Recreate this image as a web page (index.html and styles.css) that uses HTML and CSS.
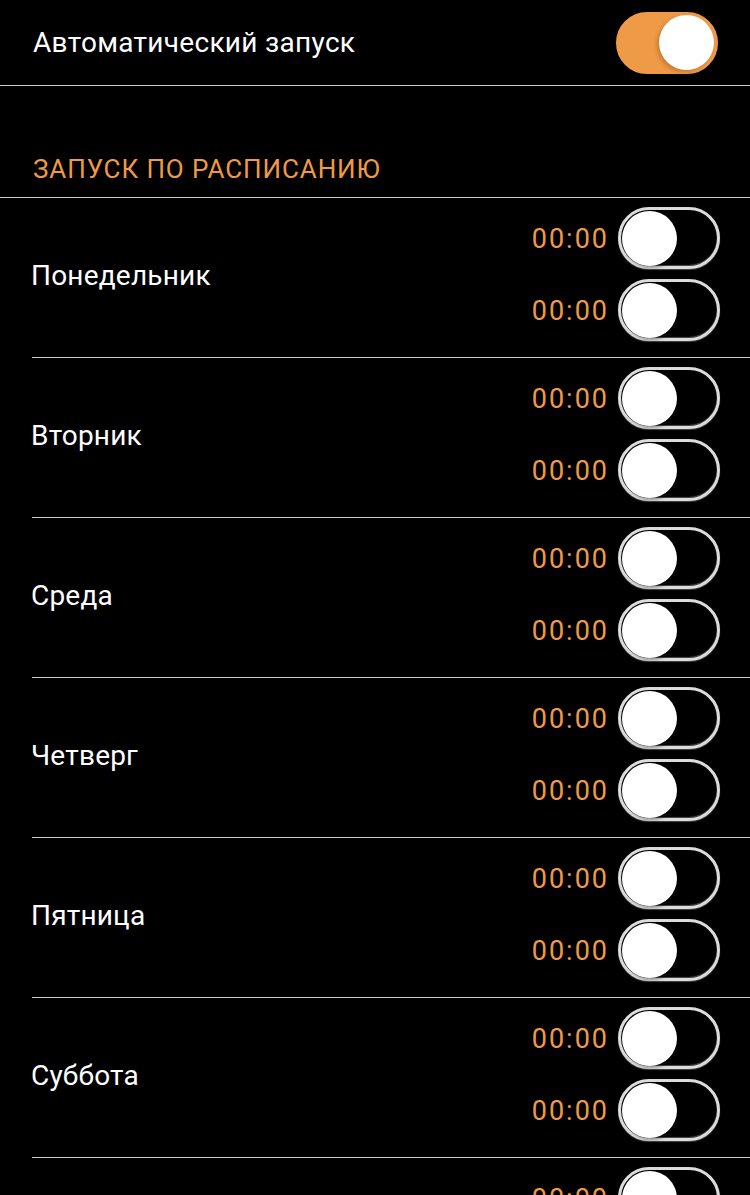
FILE: index.html
```html
<!DOCTYPE html>
<html lang="ru">
<head>
<meta charset="utf-8">
<link rel="stylesheet" href="styles.css">
</head>
<body>
<div class="screen">
  <div class="top-row">
    <span class="top-label">Автоматический запуск</span>
    <span class="toggle on"><span class="knob"></span></span>
  </div>
  <div class="section-gap"></div>
  <div class="section-header">ЗАПУСК ПО РАСПИСАНИЮ</div>
  <div class="list">
    <div class="day-row">
      <span class="day">Понедельник</span>
      <div class="slots">
        <div class="slot"><span class="time">00:00</span><span class="toggle"><span class="knob"></span></span></div>
        <div class="slot"><span class="time">00:00</span><span class="toggle"><span class="knob"></span></span></div>
      </div>
    </div>
    <div class="day-row">
      <span class="day">Вторник</span>
      <div class="slots">
        <div class="slot"><span class="time">00:00</span><span class="toggle"><span class="knob"></span></span></div>
        <div class="slot"><span class="time">00:00</span><span class="toggle"><span class="knob"></span></span></div>
      </div>
    </div>
    <div class="day-row">
      <span class="day">Среда</span>
      <div class="slots">
        <div class="slot"><span class="time">00:00</span><span class="toggle"><span class="knob"></span></span></div>
        <div class="slot"><span class="time">00:00</span><span class="toggle"><span class="knob"></span></span></div>
      </div>
    </div>
    <div class="day-row">
      <span class="day">Четверг</span>
      <div class="slots">
        <div class="slot"><span class="time">00:00</span><span class="toggle"><span class="knob"></span></span></div>
        <div class="slot"><span class="time">00:00</span><span class="toggle"><span class="knob"></span></span></div>
      </div>
    </div>
    <div class="day-row">
      <span class="day">Пятница</span>
      <div class="slots">
        <div class="slot"><span class="time">00:00</span><span class="toggle"><span class="knob"></span></span></div>
        <div class="slot"><span class="time">00:00</span><span class="toggle"><span class="knob"></span></span></div>
      </div>
    </div>
    <div class="day-row">
      <span class="day">Суббота</span>
      <div class="slots">
        <div class="slot"><span class="time">00:00</span><span class="toggle"><span class="knob"></span></span></div>
        <div class="slot"><span class="time">00:00</span><span class="toggle"><span class="knob"></span></span></div>
      </div>
    </div>
    <div class="day-row">
      <span class="day">Воскресенье</span>
      <div class="slots">
        <div class="slot"><span class="time">00:00</span><span class="toggle"><span class="knob"></span></span></div>
        <div class="slot"><span class="time">00:00</span><span class="toggle"><span class="knob"></span></span></div>
      </div>
    </div>
  </div>
</div>
</body>
</html>
```
FILE: styles.css
```css
html, body {
  margin: 0;
  padding: 0;
  background: #000;
}
body {
  font-family: Roboto, "Liberation Sans", sans-serif;
  color: #fff;
  overflow: hidden;
  height: 1195px;
}
.screen {
  width: 750px;
}
.top-row {
  height: 85px;
  display: flex;
  align-items: center;
  justify-content: space-between;
  padding: 0 32px 0 33px;
  border-bottom: 1px solid #c8c8cc;
}
.top-label {
  font-size: 28px;
  letter-spacing: 0.3px;
  margin-top: -1px;
}
.section-gap {
  height: 55px;
}
.section-header {
  height: 56px;
  padding-left: 33px;
  color: #ef9a47;
  font-size: 26px;
  letter-spacing: 0.9px;
  line-height: 56px;
  border-bottom: 1px solid #c8c8cc;
}
.day-row {
  margin-left: 32px;
  height: 159px;
  border-bottom: 1px solid #c8c8cc;
  display: flex;
  align-items: center;
  justify-content: space-between;
  padding-right: 30px;
}
.day {
  font-size: 28px;
  margin-left: -1px;
  margin-top: -4px;
  letter-spacing: 0.2px;
}
.slots {
  display: flex;
  flex-direction: column;
  gap: 10px;
  margin-top: -7px;
}
.slot {
  display: flex;
  align-items: center;
  gap: 9px;
}
.time {
  color: #ef9a47;
  font-size: 27px;
  letter-spacing: 2px;
  margin-top: 2px;
}
.toggle {
  box-sizing: border-box;
  width: 102px;
  height: 62px;
  border-radius: 31px;
  border: 3px solid #dcdcdc;
  box-shadow: inset 0 -1px 1px rgba(255,255,255,0.3), 0 1px 1px rgba(120,120,120,0.6);
  background: #000;
  display: flex;
  align-items: center;
  padding: 0 1px;
}
.knob {
  width: 55px;
  height: 55px;
  border-radius: 50%;
  background: #fff;
  box-shadow: 2px 2px 3px rgba(0,0,0,0.35);
}
.toggle.on {
  background: #ef9a47;
  border-color: #ef9a47;
  justify-content: flex-end;
  box-shadow: none;
}
.toggle.on .knob {
  box-shadow: -2px 2px 4px rgba(120,60,0,0.35);
}
```
